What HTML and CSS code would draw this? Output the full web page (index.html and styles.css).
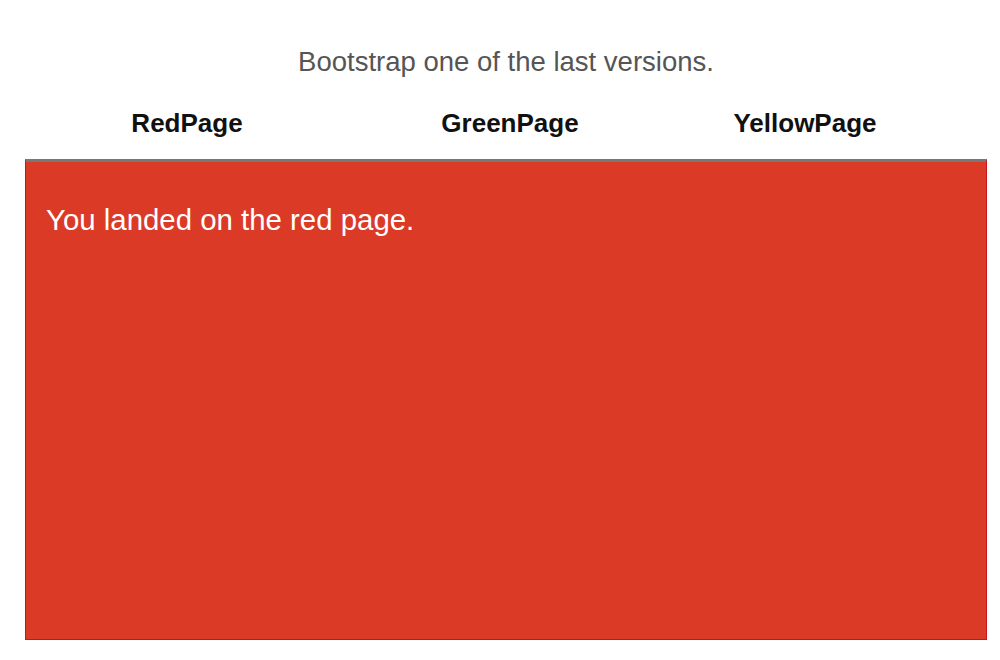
FILE: index.html
```html
<!DOCTYPE html>
<html>
<head>
<meta charset="utf-8">
<title>Pages</title>
<link rel="stylesheet" href="styles.css">
</head>
<body>
<div class="main">
  <p class="lead">Bootstrap one of the last versions.</p>
  <ul class="tabs">
    <li><a href="#red">RedPage</a></li>
    <li><a href="#green">GreenPage</a></li>
    <li><a href="#yellow">YellowPage</a></li>
  </ul>
  <div class="page page-red" id="red">
    <p>You landed on the red page.</p>
  </div>
</div>
</body>
</html>
```
FILE: styles.css
```css
body
{
  margin: 0;
  font-family: "Liberation Sans", Arial, sans-serif;
  background: #fff;
}
.main
{
  width: 962px;
  margin-left: 25px;
  padding-top: 46px;
}
.lead
{
  margin: 0;
  text-align: center;
  font-size: 27.5px;
  line-height: 32px;
  color: #555;
}
.tabs
{
  list-style: none;
  margin: 30px 0 0 0;
  padding: 0 0 21px 0;
  display: grid;
  grid-template-columns: 324px 322px 268px;
}
.tabs li
{
  text-align: center;
  font-size: 26px;
  line-height: 30px;
  font-weight: bold;
}
.tabs a
{
  color: #111;
  text-decoration: none;
}
.page
{
  border: 1px solid #c8141a;
  border-top: 3px solid #777;
  padding: 41px 20px 0 20px;
  box-sizing: border-box;
  height: 481px;
}
.page p
{
  margin: 0;
  font-size: 29.4px;
  line-height: 34px;
}
/* only red is shown for now */
.page-red
{
  background: #db3a26;
  color: #fff;
}
```
